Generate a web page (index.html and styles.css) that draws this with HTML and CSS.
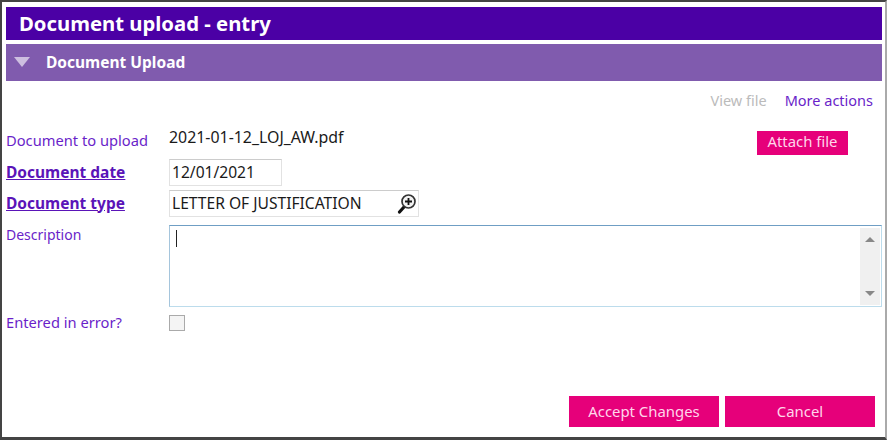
FILE: index.html
```html
<!DOCTYPE html>
<html lang="en">
<head>
    <meta charset="UTF-8">
    <title>Document upload - entry</title>
    <link rel="stylesheet" href="styles.css">
</head>
<body>
    <div class="window">
        <h1 class="title">Document upload - entry</h1>
        <div class="section">
            <span class="section-arrow"></span>
            <span>Document Upload</span>
        </div>

        <div class="actions">
            <a class="action disabled">View file</a>
            <a class="action">More actions</a>
        </div>

        <div class="row row-upload">
            <label class="label">Document to upload</label>
            <span class="filename">2021-01-12_LOJ_AW.pdf</span>
            <button class="btn btn-attach">Attach file</button>
        </div>

        <div class="row row-date">
            <label class="label required">Document date</label>
            <input class="field field-date" type="text" value="12/01/2021">
        </div>

        <div class="row row-type">
            <label class="label required">Document type</label>
            <div class="field field-type">
                <span class="field-text">LETTER OF JUSTIFICATION</span>
                <svg class="lookup" width="20" height="20" viewBox="0 0 20 20">
                    <path d="M7 13 L2.5 18" stroke="#111" stroke-width="3.2" stroke-linecap="round"/>
                    <circle cx="11.5" cy="7.5" r="6.5" fill="#f2f2f2" stroke="#333" stroke-width="1.7"/>
                    <path d="M8 7.5 H15 M11.5 4 V11" stroke="#111" stroke-width="1.8"/>
                </svg>
            </div>
        </div>

        <div class="row row-desc">
            <label class="label label-desc">Description</label>
            <div class="textarea">
                <span class="caret"></span>
                <div class="scrollbar">
                    <span class="arrow-up"></span>
                    <span class="arrow-down"></span>
                </div>
            </div>
        </div>

        <div class="row row-error">
            <label class="label">Entered in error?</label>
            <span class="checkbox"></span>
        </div>

        <div class="footer">
            <button class="btn btn-large">Accept Changes</button>
            <button class="btn btn-large">Cancel</button>
        </div>
    </div>
</body>
</html>
```

FILE: styles.css
```css
:root {
    --purple-dark: #4b00a5;
    --purple-mid: #805bae;
    --label: #6a1fc9;
    --pink: #e6007a;
}

* {
    box-sizing: border-box;
}

html, body {
    margin: 0;
    height: 100%;
}

body {
    font-family: "Noto Sans", "DejaVu Sans", sans-serif;
    font-size: 14px;
    color: #1a1a1a;
    background: white;
    overflow: hidden;
}

.window {
    width: 887px;
    height: 440px;
    padding: 5px 3px 0 4px;
    border-top: 2px solid #444;
    border-left: 2px solid #444;
    border-right: 2px solid #aaa;
    border-bottom: 3px solid #444;
    display: flex;
    flex-direction: column;
}

.title {
    margin: 0;
    height: 33px;
    padding-left: 13px;
    background: var(--purple-dark);
    color: white;
    font-size: 20.3px;
    font-weight: bold;
    line-height: 33px;
}

.section {
    display: flex;
    align-items: center;
    height: 37px;
    margin-top: 4px;
    padding: 0 0 1px 8px;
    background: var(--purple-mid);
    color: white;
    font-size: 15.5px;
    font-weight: bold;
}

.section-arrow {
    width: 0;
    height: 0;
    margin-right: 16px;
    border-left: 8px solid transparent;
    border-right: 8px solid transparent;
    border-top: 10px solid #cdbfe0;
}

.actions {
    display: flex;
    justify-content: flex-end;
    gap: 18px;
    padding: 9px 9px 0 0;
    height: 47px;
    font-size: 14.5px;
}

.action {
    color: var(--label);
}

.action.disabled {
    color: #bbb;
}

.row {
    display: flex;
    align-items: flex-start;
}

.label {
    width: 163px;
    flex-shrink: 0;
    font-size: 14.7px;
    color: var(--label);
}

.label-desc {
    font-size: 14px;
}

.required {
    font-size: 15.5px;
    font-weight: bold;
    text-decoration: underline;
    color: #5a14b8;
}

.row-upload {
    height: 31px;
    padding-top: 2px;
}

.filename {
    margin-top: -1px;
    font-size: 15.9px;
    line-height: 16px;
}

.btn {
    font-family: inherit;
    background: var(--pink);
    color: #ffd6ea;
    border: none;
    padding: 0;
}

.btn-attach {
    width: 91px;
    height: 24px;
    margin-top: 1px;
    margin-left: auto;
    margin-right: 34px;
    font-size: 14.9px;
    line-height: 18px;
    padding-bottom: 5px;
}

.row-date {
    height: 31px;
}

.row-date .label {
    padding-top: 2px;
}

.row-type {
    height: 35px;
    padding-bottom: 8px;
    align-items: center;
}

.row-type .label {
    margin-top: -2px;
}

.field {
    height: 27px;
    padding: 0 2px;
    border: 1px solid #e2e2e2;
    border-top-color: #ccc;
    font-family: inherit;
    font-size: 15.6px;
    color: #1a1a1a;
    background: white;
}

.field-date {
    width: 113px;
    padding-bottom: 2px;
}

.field-type {
    width: 250px;
    display: flex;
    align-items: center;
    justify-content: space-between;
}

.field-text {
    padding-bottom: 2px;
}

.lookup {
    margin-right: -1px;
}

.row-desc {
    height: 89px;
}

.textarea {
    flex: 1;
    height: 82px;
    display: flex;
    justify-content: space-between;
    border: 1px solid #bcdcec;
    border-top: 1px solid #6f9ec4;
    border-left: 1px solid #a5c5dc;
    padding-left: 6px;
}

.caret {
    width: 1px;
    height: 17px;
    margin-top: 4px;
    background: #222;
}

.scrollbar {
    width: 20px;
    margin: 2px 1px 1px 0;
    background: #f0f0f0;
    display: flex;
    flex-direction: column;
    align-items: center;
    justify-content: space-between;
    padding: 9px 0 9px;
}

.arrow-up, .arrow-down {
    width: 0;
    height: 0;
    border-left: 5px solid transparent;
    border-right: 5px solid transparent;
}

.arrow-up {
    border-bottom: 5px solid #888;
}

.arrow-down {
    border-top: 5px solid #888;
}

.row-error {
    align-items: center;
    height: 18px;
}

.row-error .label {
    margin-top: -2px;
}

.checkbox {
    width: 16px;
    height: 16px;
    border: 1px solid #aaa;
    background: #f4f4f4;
}

.footer {
    display: flex;
    justify-content: flex-end;
    gap: 6px;
    margin-top: auto;
    padding-right: 7px;
    padding-bottom: 10px;
}

.btn-large {
    width: 150px;
    height: 31px;
    font-size: 14.9px;
    padding-bottom: 2px;
}
```
